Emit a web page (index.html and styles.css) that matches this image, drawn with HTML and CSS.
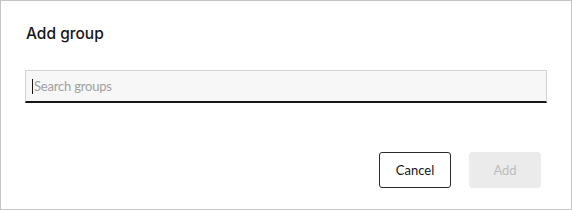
FILE: index.html
```html
<!DOCTYPE html>
<html lang="en">
<head>
  <meta charset="UTF-8">
  <meta name="viewport" content="width=device-width, initial-scale=1.0">
  <title>Add group</title>
  <link rel="stylesheet" href="styles.css">
</head>
<body>
  <div class="dialog">
    <h2 class="dialog-title">Add group</h2>
    <div class="search-field">
      <span class="caret"></span>
      <input type="text" placeholder="Search groups" />
    </div>
    <div class="dialog-actions">
      <button class="btn btn-secondary">Cancel</button>
      <button class="btn btn-primary" disabled>Add</button>
    </div>
  </div>
</body>
</html>
```

FILE: styles.css
```css
body {
  margin: 0;
  font-family: Lato, "Noto Sans", sans-serif;
  background-color: #fff;
}

.dialog {
  width: 572px;
  height: 210px;
  box-sizing: border-box;
  border: 1px solid #c4c4c4;
  padding: 0 24px 0 24px;
  display: flex;
  flex-direction: column;
}

.dialog-title {
  margin: 23px 0 0 1px;
  font-family: Inter, sans-serif;
  font-size: 15.5px;
  font-weight: 500;
  line-height: 20px;
  color: #161616;
}

.search-field {
  position: relative;
  margin-top: 26px;
  width: 522px;
}

.search-field input {
  width: 100%;
  height: 33px;
  box-sizing: border-box;
  margin: 0;
  padding: 0 8px;
  background-color: #f7f7f7;
  border: 1px solid #d2d2d2;
  border-bottom: 2px solid #161616;
  border-radius: 0;
  font-family: Lato, sans-serif;
  font-size: 13px;
  letter-spacing: -0.2px;
  color: #161616;
  outline: none;
}

.search-field input::placeholder {
  color: #a0a0a0;
}

.caret {
  position: absolute;
  left: 7px;
  top: 9px;
  width: 1px;
  height: 15px;
  background-color: #161616;
}

.dialog-actions {
  display: flex;
  justify-content: flex-end;
  gap: 18px;
  margin-top: 49px;
  padding-right: 6px;
}

.btn {
  width: 72px;
  height: 36px;
  box-sizing: border-box;
  border-radius: 3px;
  font-family: Lato, sans-serif;
  font-size: 13px;
  padding: 0;
}

.btn-secondary {
  background-color: #fff;
  border: 1px solid #2b2b2b;
  color: #161616;
}

.btn-primary {
  background-color: #ebebeb;
  border: 1px solid #ebebeb;
  color: #bdbdbd;
}
```
